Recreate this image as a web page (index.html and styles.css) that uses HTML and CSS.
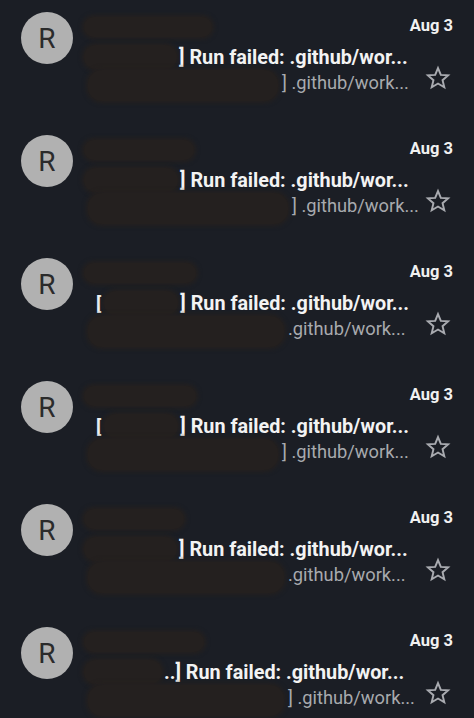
FILE: index.html
```html
<!DOCTYPE html>
<html lang="en">
<head>
    <meta charset="UTF-8">
    <meta name="viewport" content="width=device-width, initial-scale=1.0">
    <title>Inbox</title>
    <link rel="stylesheet" href="styles.css">
</head>
<body>
    <div class="mail-list">
        <div class="mail-row">
            <div class="avatar">R</div>
            <div class="mail-body">
                <div class="top-line">
                    <span class="redact sender" style="width: 128px"></span>
                    <span class="date">Aug 3</span>
                </div>
                <div class="subject">
                    <span class="redact subj-redact" style="width: 93px"></span>
                    <span class="subject-text">] Run failed: .github/wor...</span>
                </div>
                <div class="snippet-line">
                    <span class="redact snip-redact" style="width: 190px"></span>
                    <span class="snippet">] .github/work...</span>
                    <svg class="star" viewBox="0 0 24 24"><polygon points="12,2.8 14.6,9.1 21.3,9.6 16.2,14 17.8,20.6 12,17.1 6.2,20.6 7.8,14 2.7,9.6 9.4,9.1"/></svg>
                </div>
            </div>
        </div>

        <div class="mail-row">
            <div class="avatar">R</div>
            <div class="mail-body">
                <div class="top-line">
                    <span class="redact sender" style="width: 110px"></span>
                    <span class="date">Aug 3</span>
                </div>
                <div class="subject">
                    <span class="redact subj-redact" style="width: 94px"></span>
                    <span class="subject-text">] Run failed: .github/wor...</span>
                </div>
                <div class="snippet-line">
                    <span class="redact snip-redact" style="width: 200px"></span>
                    <span class="snippet">] .github/work...</span>
                    <svg class="star" viewBox="0 0 24 24"><polygon points="12,2.8 14.6,9.1 21.3,9.6 16.2,14 17.8,20.6 12,17.1 6.2,20.6 7.8,14 2.7,9.6 9.4,9.1"/></svg>
                </div>
            </div>
        </div>

        <div class="mail-row">
            <div class="avatar">R</div>
            <div class="mail-body">
                <div class="top-line">
                    <span class="redact sender" style="width: 112px"></span>
                    <span class="date">Aug 3</span>
                </div>
                <div class="subject">
                    <span class="bracket">[</span>
                    <span class="redact subj-redact after-bracket" style="width: 74px"></span>
                    <span class="subject-text">] Run failed: .github/wor...</span>
                </div>
                <div class="snippet-line">
                    <span class="redact snip-redact" style="width: 196px"></span>
                    <span class="snippet">.github/work...</span>
                    <svg class="star" viewBox="0 0 24 24"><polygon points="12,2.8 14.6,9.1 21.3,9.6 16.2,14 17.8,20.6 12,17.1 6.2,20.6 7.8,14 2.7,9.6 9.4,9.1"/></svg>
                </div>
            </div>
        </div>

        <div class="mail-row">
            <div class="avatar">R</div>
            <div class="mail-body">
                <div class="top-line">
                    <span class="redact sender" style="width: 112px"></span>
                    <span class="date">Aug 3</span>
                </div>
                <div class="subject">
                    <span class="bracket">[</span>
                    <span class="redact subj-redact after-bracket" style="width: 74px"></span>
                    <span class="subject-text">] Run failed: .github/wor...</span>
                </div>
                <div class="snippet-line">
                    <span class="redact snip-redact" style="width: 190px"></span>
                    <span class="snippet">] .github/work...</span>
                    <svg class="star" viewBox="0 0 24 24"><polygon points="12,2.8 14.6,9.1 21.3,9.6 16.2,14 17.8,20.6 12,17.1 6.2,20.6 7.8,14 2.7,9.6 9.4,9.1"/></svg>
                </div>
            </div>
        </div>

        <div class="mail-row">
            <div class="avatar">R</div>
            <div class="mail-body">
                <div class="top-line">
                    <span class="redact sender" style="width: 100px"></span>
                    <span class="date">Aug 3</span>
                </div>
                <div class="subject">
                    <span class="redact subj-redact" style="width: 93px"></span>
                    <span class="subject-text">] Run failed: .github/wor...</span>
                </div>
                <div class="snippet-line">
                    <span class="redact snip-redact" style="width: 196px"></span>
                    <span class="snippet">.github/work...</span>
                    <svg class="star" viewBox="0 0 24 24"><polygon points="12,2.8 14.6,9.1 21.3,9.6 16.2,14 17.8,20.6 12,17.1 6.2,20.6 7.8,14 2.7,9.6 9.4,9.1"/></svg>
                </div>
            </div>
        </div>

        <div class="mail-row">
            <div class="avatar">R</div>
            <div class="mail-body">
                <div class="top-line">
                    <span class="redact sender" style="width: 120px"></span>
                    <span class="date">Aug 3</span>
                </div>
                <div class="subject">
                    <span class="redact subj-redact" style="width: 78px"></span>
                    <span class="subject-text">..] Run failed: .github/wor...</span>
                </div>
                <div class="snippet-line">
                    <span class="redact snip-redact" style="width: 196px"></span>
                    <span class="snippet">] .github/work...</span>
                    <svg class="star" viewBox="0 0 24 24"><polygon points="12,2.8 14.6,9.1 21.3,9.6 16.2,14 17.8,20.6 12,17.1 6.2,20.6 7.8,14 2.7,9.6 9.4,9.1"/></svg>
                </div>
            </div>
        </div>
    </div>
</body>
</html>
```

FILE: styles.css
```css
body {
    margin: 0;
    background-color: #1b1e25;
    font-family: Roboto, "Liberation Sans", sans-serif;
    color: #e8eaed;
}
.mail-list {
    display: flex;
    flex-direction: column;
}
.mail-row {
    display: flex;
    height: 123px;
    box-sizing: border-box;
    padding: 12px 21px 0 21px;
}
.avatar {
    width: 52px;
    height: 52px;
    border-radius: 50%;
    background-color: #b1b1b1;
    color: #2b2b2b;
    font-size: 28px;
    display: flex;
    align-items: center;
    justify-content: center;
    flex-shrink: 0;
}
.mail-body {
    flex: 1;
    margin-left: 19px;
    display: flex;
    flex-direction: column;
}
.top-line {
    display: flex;
    align-items: center;
    justify-content: space-between;
    height: 28px;
}
.date {
    font-weight: bold;
    font-size: 16.5px;
    color: #f1f1f1;
    margin-top: -1px;
}
.subject {
    display: flex;
    align-items: center;
    height: 26px;
    margin-top: 4px;
    white-space: nowrap;
}
.subject-text {
    font-weight: bold;
    font-size: 19.8px;
    color: #f3f3f3;
}
.bracket {
    font-size: 19px;
    font-weight: bold;
    color: #f3f3f3;
    margin-left: 4px;
}
.snippet-line {
    display: flex;
    align-items: center;
    height: 24px;
    white-space: nowrap;
}
.snippet {
    font-size: 18.3px;
    color: #a8aaae;
    margin-left: 2px;
}
.star {
    width: 26px;
    height: 26px;
    margin-left: auto;
    margin-right: 2px;
    margin-top: -8px;
    fill: none;
    stroke: #a9abb0;
    stroke-width: 1.8;
    stroke-linejoin: miter;
}

/* redaction blobs */
.redact {
    display: inline-block;
    background-color: #24201f;
    border-radius: 14px;
    box-shadow: 0 0 4px 2px #24201f;
}
.sender {
    height: 20px;
    margin-left: -8px;
    margin-top: 2px;
}
.subj-redact {
    height: 24px;
    margin-left: -8px;
    margin-right: 2px;
}
.subj-redact.after-bracket {
    margin-left: 3px;
}
.snip-redact {
    height: 31px;
    margin-left: -4px;
    margin-right: 2px;
    margin-top: 6px;
}
```
